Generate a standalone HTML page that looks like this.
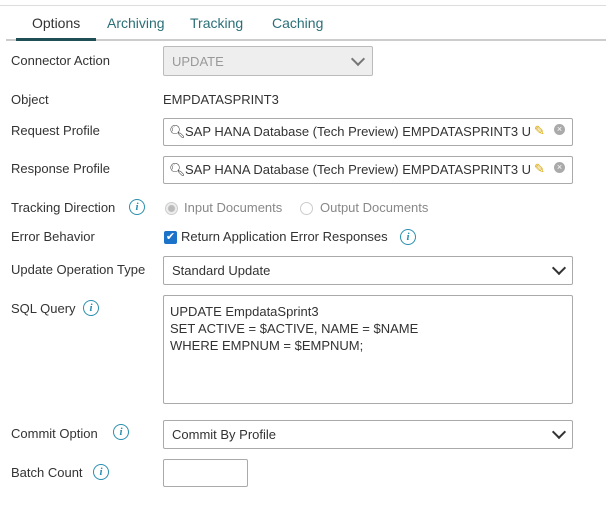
<!DOCTYPE html>
<html><head><style>
body{margin:0;width:606px;height:510px;background:#fff;font-family:"Liberation Sans",sans-serif;font-size:13px;color:#333;position:relative;overflow:hidden}
.a{position:absolute}
.lbl{position:absolute;left:11px;line-height:16px}
.box{position:absolute;border:1px solid #aaa;background:#fff;box-sizing:border-box;border-radius:2px}
.info{position:absolute;width:14px;height:14px;border:1.5px solid #2a8fb0;border-radius:50%;color:#2a8fb0;font:italic bold 11px "Liberation Serif",serif;text-align:center;line-height:14px}
.chev{position:absolute;width:8px;height:8px;border-right:2px solid #333;border-bottom:2px solid #333;transform:rotate(45deg)}
.tab{position:absolute;top:15px;font-size:14px;color:#2a6f78}
</style></head><body>
<div class="a" style="left:0;top:5px;width:606px;height:1px;background:#ddd"></div>
<div class="tab" style="left:32px;color:#333">Options</div>
<div class="tab" style="left:107px">Archiving</div>
<div class="tab" style="left:190px">Tracking</div>
<div class="tab" style="left:272px">Caching</div>
<div class="a" style="left:6px;top:39px;width:600px;height:2px;background:#ccc"></div>
<div class="a" style="left:16px;top:38px;width:80px;height:3px;background:#1f4f55"></div>

<div class="lbl" style="top:53px">Connector Action</div>
<div class="box" style="left:163px;top:46px;width:210px;height:30px;background:#eee;border-color:#bbb"><span class="a" style="left:8px;top:7px;color:#999">UPDATE</span><div class="chev" style="left:189px;top:7px;border-color:#777"></div></div>

<div class="lbl" style="top:92px">Object</div>
<div class="a" style="left:163px;top:92px;line-height:16px">EMPDATASPRINT3</div>

<div class="lbl" style="top:123px">Request Profile</div>
<div class="box" style="left:163px;top:118px;width:410px;height:28px"><span class="a" style="left:5px;top:5px">&#x1F50D;&#xFE0E;</span><span class="a" style="left:21px;top:5px;white-space:nowrap;width:345px;overflow:hidden">SAP HANA Database (Tech Preview) EMPDATASPRINT3 UPDATE</span><span class="a" style="left:370px;top:4px;color:#d9a400">✎</span><span class="a" style="left:390px;top:5px;width:11px;height:11px;border-radius:50%;background:#aaa;color:#fff;font-size:9px;line-height:11px;text-align:center">×</span></div>

<div class="lbl" style="top:161px">Response Profile</div>
<div class="box" style="left:163px;top:156px;width:410px;height:28px"><span class="a" style="left:5px;top:5px">&#x1F50D;&#xFE0E;</span><span class="a" style="left:21px;top:5px;white-space:nowrap;width:345px;overflow:hidden">SAP HANA Database (Tech Preview) EMPDATASPRINT3 UPDATE</span><span class="a" style="left:370px;top:4px;color:#d9a400">✎</span><span class="a" style="left:390px;top:5px;width:11px;height:11px;border-radius:50%;background:#aaa;color:#fff;font-size:9px;line-height:11px;text-align:center">×</span></div>

<div class="lbl" style="top:200px">Tracking Direction</div>
<div class="info" style="left:129px;top:199px">i</div>
<div class="a" style="left:165px;top:202px;width:11px;height:11px;border-radius:50%;border:1px solid #ccc;background:radial-gradient(#bbb 3px,#eee 4px)"></div>
<div class="a" style="left:184px;top:200px;color:#888">Input Documents</div>
<div class="a" style="left:300px;top:202px;width:11px;height:11px;border-radius:50%;border:1px solid #ccc"></div>
<div class="a" style="left:320px;top:200px;color:#888">Output Documents</div>

<div class="lbl" style="top:229px">Error Behavior</div>
<div class="a" style="left:164px;top:231px;width:13px;height:13px;border-radius:2px;background:#1a73c8;color:#fff;font-size:11px;line-height:13px;text-align:center">✔</div>
<div class="a" style="left:181px;top:229px">Return Application Error Responses</div>
<div class="info" style="left:400px;top:229px">i</div>

<div class="lbl" style="top:262px">Update Operation Type</div>
<div class="box" style="left:163px;top:256px;width:410px;height:29px"><span class="a" style="left:8px;top:6px">Standard Update</span><div class="chev" style="left:390px;top:6px"></div></div>

<div class="lbl" style="top:301px">SQL Query</div>
<div class="info" style="left:83px;top:300px">i</div>
<div class="box" style="left:163px;top:295px;width:410px;height:109px"><div class="a" style="left:6px;top:7px;line-height:17px">UPDATE EmpdataSprint3<br>SET ACTIVE = $ACTIVE, NAME = $NAME<br>WHERE EMPNUM = $EMPNUM;</div></div>

<div class="lbl" style="top:426px">Commit Option</div>
<div class="info" style="left:113px;top:424px">i</div>
<div class="box" style="left:163px;top:420px;width:410px;height:29px"><span class="a" style="left:8px;top:6px">Commit By Profile</span><div class="chev" style="left:390px;top:6px"></div></div>

<div class="lbl" style="top:465px">Batch Count</div>
<div class="info" style="left:93px;top:464px">i</div>
<div class="box" style="left:163px;top:459px;width:85px;height:28px"></div>
</body></html>
